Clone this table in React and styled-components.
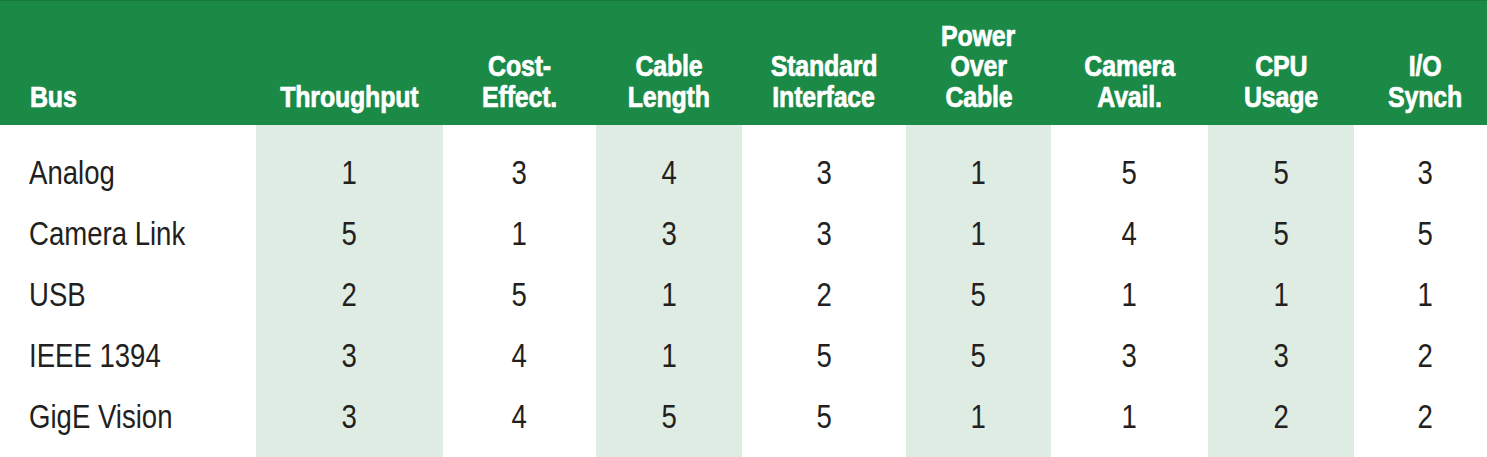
import styled, { createGlobalStyle } from 'styled-components';

const GlobalStyle = createGlobalStyle`
  html, body {
    margin: 0;
    padding: 0;
    background: #ffffff;
    overflow: hidden;
  }
  body {
    font-family: "Liberation Sans", Arial, sans-serif;
  }
`;

const columns = [
  { title: ['Bus'], width: 256, align: 'left' },
  { title: ['Throughput'], width: 187, shaded: true },
  { title: ['Cost-', 'Effect.'], width: 153 },
  { title: ['Cable', 'Length'], width: 146, shaded: true },
  { title: ['Standard', 'Interface'], width: 164 },
  { title: ['Power', 'Over', 'Cable'], width: 145, shaded: true },
  { title: ['Camera', 'Avail.'], width: 157 },
  { title: ['CPU', 'Usage'], width: 146, shaded: true },
  { title: ['I/O', 'Synch'], width: 133, offset: 10 },
];

const rows = [
  ['Analog', 1, 3, 4, 3, 1, 5, 5, 3],
  ['Camera Link', 5, 1, 3, 3, 1, 4, 5, 5],
  ['USB', 2, 5, 1, 2, 5, 1, 1, 1],
  ['IEEE 1394', 3, 4, 1, 5, 5, 3, 3, 2],
  ['GigE Vision', 3, 4, 5, 5, 1, 1, 2, 2],
];

const Table = styled.div`
  display: flex;
  width: 1487px;
  height: 457px;
`;

const Column = styled.div`
  display: flex;
  flex-direction: column;
  flex: 0 0 ${(p) => p.$width}px;
  width: ${(p) => p.$width}px;
`;

const HeadCell = styled.div`
  height: 125px;
  box-sizing: border-box;
  background: #1b8a47;
  border-top: 1px solid #157a3c;
  display: flex;
  flex-direction: column;
  justify-content: flex-end;
  align-items: ${(p) => (p.$align === 'left' ? 'flex-start' : 'center')};
  padding: 0 0 13px ${(p) => (p.$align === 'left' ? 30 : p.$offset || 0)}px;
  color: #ffffff;
  font-weight: 700;
  font-size: 29px;
  line-height: 30.5px;
  letter-spacing: -0.2px;
  -webkit-text-stroke: 0.7px #ffffff;
`;

const HeadLine = styled.span`
  display: block;
  white-space: nowrap;
  transform: scaleX(0.86);
  transform-origin: ${(p) => (p.$align === 'left' ? 'left' : 'center')} center;
`;

const Body = styled.div`
  flex: 1;
  background: ${(p) => (p.$shaded ? '#dfece3' : '#ffffff')};
  padding: 17px 0 0;
`;

const Cell = styled.div`
  height: 61px;
  line-height: 61px;
  display: flex;
  justify-content: ${(p) => (p.$align === 'left' ? 'flex-start' : 'center')};
  padding-left: ${(p) => (p.$align === 'left' ? 29 : p.$offset || 0)}px;
  color: #231f20;
  font-size: 33px;
  white-space: nowrap;
`;

const CellText = styled.span`
  display: inline-block;
  transform: scaleX(0.835);
  transform-origin: ${(p) => (p.$align === 'left' ? 'left' : 'center')} center;
`;

export default function App() {
  return (
    <>
      <GlobalStyle />
      <Table>
        {columns.map((col, ci) => (
          <Column key={ci} $width={col.width}>
            <HeadCell $align={col.align} $offset={col.offset}>
              {col.title.map((line) => (
                <HeadLine key={line} $align={col.align}>
                  {line}
                </HeadLine>
              ))}
            </HeadCell>
            <Body $shaded={col.shaded}>
              {rows.map((row, ri) => (
                <Cell key={ri} $align={col.align} $offset={col.offset}>
                  <CellText $align={col.align}>{row[ci]}</CellText>
                </Cell>
              ))}
            </Body>
          </Column>
        ))}
      </Table>
    </>
  );
}
